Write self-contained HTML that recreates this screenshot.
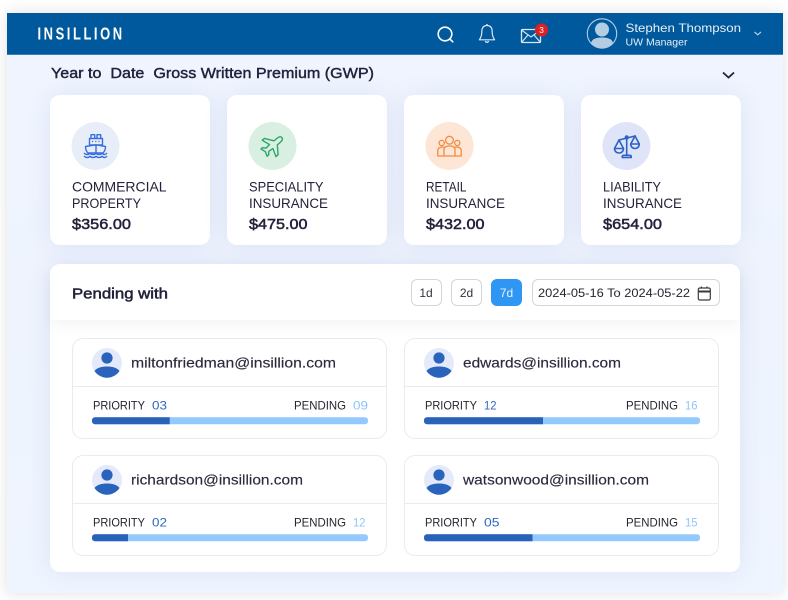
<!DOCTYPE html>
<html lang="en">
<head>
<meta charset="utf-8">
<title>Insillion</title>
<style>
html,body{margin:0;padding:0;width:788px;height:600px;overflow:hidden;background:#fff;}
.abs{position:absolute;box-sizing:border-box;}
#frame{left:7px;top:13px;width:776px;height:580px;background:linear-gradient(180deg,#f0f5ff 0%,#eef3fd 50%,#eff5ff 100%);box-shadow:0 0 14px rgba(0,0,0,.12);overflow:hidden;}
#hdr{left:7px;top:13px;width:776px;height:41.5px;background:#00599c;border-bottom:1px solid #3a80b8;}
.card{top:95px;width:160px;height:150px;background:#fff;border-radius:10px;box-shadow:0 0 24px rgba(90,110,170,.12);}
#panel{left:50px;top:263.5px;width:690px;height:308px;background:#fff;border-radius:10px;box-shadow:0 0 24px rgba(90,110,170,.12);}
#ph{left:50px;top:263.5px;width:690px;height:56.5px;background:#fff;border-radius:10px 10px 0 0;box-shadow:0 6px 14px rgba(0,0,0,.045);}
.in{width:314.5px;height:101px;background:#fff;border:1px solid #e9ebef;border-radius:11px;}
.btn{top:279px;width:31px;height:27px;background:#fff;border:1px solid #d6d6d6;border-radius:6px;}
svg{position:absolute;left:0;top:0;}
text{font-family:"Liberation Sans",sans-serif;}
.n{fill:#22223a;}
</style>
</head>
<body>
<div class="abs" id="frame"></div>
<div class="abs card" style="left:50px"></div>
<div class="abs card" style="left:227px"></div>
<div class="abs card" style="left:404px"></div>
<div class="abs card" style="left:581px"></div>
<div class="abs" id="panel"></div>
<div class="abs" id="ph"></div>
<div class="abs in" style="left:72px;top:337.5px"></div>
<div class="abs in" style="left:404px;top:337.5px"></div>
<div class="abs in" style="left:72px;top:454.5px"></div>
<div class="abs in" style="left:404px;top:454.5px"></div>
<div class="abs btn" style="left:410.5px"></div>
<div class="abs btn" style="left:451px"></div>
<div class="abs btn" style="left:491px;background:#3096f3;border-color:#3096f3"></div>
<div class="abs btn" style="left:531.5px;width:188.5px"></div>
<div class="abs" id="hdr"></div>

<svg width="788" height="600" viewBox="0 0 788 600" xmlns="http://www.w3.org/2000/svg">
<defs>
<clipPath id="uc"><circle cx="0" cy="0" r="15"/></clipPath>
<g id="av">
<circle r="15" fill="#e4eafb"/>
<circle cy="-5" r="5.6" fill="#2a63bb"/>
<path d="M-12.5,8 C-10,4.5 -5,3.5 0,3.5 C5,3.5 10,4.5 12.5,8 A15,15 0 0 1 -12.5,8Z" fill="#2a63bb"/>
</g>
</defs>

<!-- Header -->
<g transform="translate(37.5,39.5) scale(.72,1)">
<text x="0" y="0" font-size="18" font-weight="700" fill="#fff" textLength="117.5" lengthAdjust="spacing">INSILLION</text>
</g>

<circle cx="445" cy="34" r="6.8" fill="none" stroke="#fff" stroke-width="1.6"/>
<path d="M449.8,39 L452.8,41.8" stroke="#fff" stroke-width="1.6" stroke-linecap="round"/>

<path d="M487,25.5 C483,25.5 481.8,28.5 481.8,32 C481.8,36 480.6,38 479.4,39.8 L494.6,39.8 C493.4,38 492.2,36 492.2,32 C492.2,28.5 491,25.5 487,25.5Z" fill="none" stroke="#dbe8f3" stroke-width="1.2" stroke-linejoin="round"/>
<path d="M485.4,41 C486,42.8 488,42.8 488.6,41" fill="none" stroke="#dbe8f3" stroke-width="1.2"/>
<path d="M487,25.5 V24" stroke="#dbe8f3" stroke-width="1.4"/>

<rect x="521.5" y="29.5" width="19" height="13" rx="1" fill="none" stroke="#dbe8f3" stroke-width="1.3"/>
<path d="M521.5,30 L531,37 L540.5,30 M521.5,42.5 L528,35 M540.5,42.5 L534,35" fill="none" stroke="#dbe8f3" stroke-width="1.1"/>
<circle cx="541.5" cy="30" r="6.5" fill="#e02020"/>
<text x="541.5" y="33" font-size="8.5" fill="#fff" text-anchor="middle">3</text>

<circle cx="602" cy="33.5" r="14.7" fill="none" stroke="#b3cde3" stroke-width="1.1"/>
<circle cx="602" cy="29.5" r="7" fill="#b3cde3"/>
<path d="M591,43 C592,38.5 597,37.5 602,37.5 C607,37.5 612,38.5 613,43 C610,46.5 606,48 602,48 C598,48 594,46.5 591,43Z" fill="#b3cde3"/>

<text x="625.5" y="32" font-size="12" fill="#e6eff7" textLength="115.5" lengthAdjust="spacingAndGlyphs">Stephen Thompson</text>
<text x="625.5" y="45.5" font-size="10" fill="#e6eff7" textLength="62" lengthAdjust="spacingAndGlyphs">UW Manager</text>
<path d="M754.5,32 L757.7,34.8 L761,32" fill="none" stroke="#b3cde3" stroke-width="1.2"/>

<!-- Title -->
<text class="n" x="51" y="78" font-size="14.5" stroke="#22223a" stroke-width=".4" textLength="323" lengthAdjust="spacingAndGlyphs" xml:space="preserve">Year to  Date  Gross Written Premium (GWP)</text>
<path d="M723,72.5 L728.5,77.5 L734,72.5" fill="none" stroke="#22223a" stroke-width="1.8"/>

<!-- Card icons -->
<circle cx="95.5" cy="146" r="24" fill="#e8eef8"/>
<g fill="none" stroke="#3a6ee0" stroke-width="1.4" stroke-linejoin="round">
<path d="M91,138.5 V134.7 H94.7 V138.5 M97,138.5 V134.7 H100.7 V138.5"/>
<rect x="89.5" y="138.5" width="13" height="6.5"/>
<path d="M85.5,146.5 L96,144.8 L105.5,146.5 C105.5,149.5 104.5,151.5 103,153 H88 C86.5,151.5 85.5,149.5 85.5,146.5Z M96,145 V153"/>
<path d="M84,153 C86,155 88,155 90,153.3 C92,155 94,155 96,153.3 C98,155 100,155 102,153.3 C104,155 105.5,155 107,153"/>
<path d="M84,156 C86,158 88,158 90,156.3 C92,158 94,158 96,156.3 C98,158 100,158 102,156.3 C104,158 105.5,158 107,156"/>
<path d="M92,141.5 H93.2 M95.2,141.5 H96.4 M98.4,141.5 H99.6" stroke-width="1.2"/>
</g>

<circle cx="272.5" cy="146" r="24" fill="#d8efe2"/>
<g transform="translate(272.5,145.5) rotate(50) scale(.82)">
<path d="M0,-15 C2.4,-15 3.2,-12 3.2,-9 L3.2,-5 L13,2 L13,5.5 L3.2,2 L2.6,8 L5.8,11 L5.8,13.5 L0,11.5 L-5.8,13.5 L-5.8,11 L-2.6,8 L-3.2,2 L-13,5.5 L-13,2 L-3.2,-5 L-3.2,-9 C-3.2,-12 -2.4,-15 0,-15Z" fill="none" stroke="#2ea568" stroke-width="1.7" stroke-linejoin="round"/>
</g>

<circle cx="449.5" cy="146" r="24" fill="#fde6d6"/>
<g fill="none" stroke="#f58a3f" stroke-width="1.3" stroke-linejoin="round">
<circle cx="449.5" cy="140.2" r="3.9"/>
<circle cx="441.7" cy="143" r="2.6"/>
<circle cx="457.3" cy="143" r="2.6"/>
<path d="M444,156 V149.5 C444,147 446.5,146 449.5,146 C452.5,146 455,147 455,149.5 V156Z"/>
<path d="M444,147.3 C441.5,146.5 437.8,147.5 437.8,150.5 V156 H444 M455,147.3 C457.5,146.5 461.2,147.5 461.2,150.5 V156 H455"/>
</g>

<circle cx="626.5" cy="146" r="24" fill="#e0e4f8"/>
<g fill="none" stroke="#2a63c4" stroke-width="1.6" stroke-linejoin="round" stroke-linecap="round">
<path d="M626.7,137.5 V155.5"/>
<path d="M619,140 L635,136"/>
<circle cx="626.7" cy="137.5" r="1.4"/>
<path d="M619,140 L614.5,148.5 M619,140 L623.5,148.5 M614.5,148.5 C614.5,154.5 623.5,154.5 623.5,148.5Z"/>
<path d="M635,136 L630.7,144 M635,136 L639.3,144 M630.7,144 C630.7,150 639.3,150 639.3,144Z"/>
<path d="M622.3,157.5 V156.5 C622.3,155.7 623,155.3 624,155.3 H629.5 C630.5,155.3 631.2,155.7 631.2,156.5 V157.5Z"/>
</g>

<!-- Card labels -->
<g class="n" font-size="14" fill="#2a2a3e">
<text x="72" y="191.5" textLength="94.5" lengthAdjust="spacingAndGlyphs">COMMERCIAL</text>
<text x="72" y="208" textLength="69" lengthAdjust="spacingAndGlyphs">PROPERTY</text>
<text x="249" y="191.5" textLength="74.5" lengthAdjust="spacingAndGlyphs">SPECIALITY</text>
<text x="249" y="208" textLength="79" lengthAdjust="spacingAndGlyphs">INSURANCE</text>
<text x="426" y="191.5" textLength="40.5" lengthAdjust="spacingAndGlyphs">RETAIL</text>
<text x="426" y="208" textLength="79" lengthAdjust="spacingAndGlyphs">INSURANCE</text>
<text x="603" y="191.5" textLength="58" lengthAdjust="spacingAndGlyphs">LIABILITY</text>
<text x="603" y="208" textLength="79" lengthAdjust="spacingAndGlyphs">INSURANCE</text>
</g>
<g font-size="14.5" fill="#22223a" stroke="#22223a" stroke-width=".5">
<text x="72" y="229" textLength="59" lengthAdjust="spacingAndGlyphs">$356.00</text>
<text x="249" y="229" textLength="58.5" lengthAdjust="spacingAndGlyphs">$475.00</text>
<text x="426" y="229" textLength="58.5" lengthAdjust="spacingAndGlyphs">$432.00</text>
<text x="603" y="229" textLength="59" lengthAdjust="spacingAndGlyphs">$654.00</text>
</g>

<!-- Panel head -->
<text x="72" y="298.5" font-size="14.5" fill="#22223a" stroke="#22223a" stroke-width=".5" textLength="96" lengthAdjust="spacingAndGlyphs">Pending with</text>
<text x="426" y="297" font-size="12" fill="#33333f" text-anchor="middle">1d</text>
<text x="466.5" y="297" font-size="12" fill="#33333f" text-anchor="middle">2d</text>
<text x="506.5" y="297" font-size="12" fill="#e8f3fe" text-anchor="middle">7d</text>
<text x="538" y="297" font-size="11.5" fill="#25252f" textLength="152" lengthAdjust="spacingAndGlyphs">2024-05-16 To 2024-05-22</text>
<g fill="none" stroke="#3a3a40" stroke-width="1.2">
<rect x="698.3" y="288" width="12" height="12" rx="1.5"/>
<path d="M698.3,291.5 H710.3" stroke-width="2"/>
<path d="M701.5,286.5 V288.5 M707,286.5 V288.5"/>
</g>

<!-- Inner cards -->
<use href="#av" x="107" y="363"/>
<use href="#av" x="439" y="363"/>
<use href="#av" x="107" y="480"/>
<use href="#av" x="439" y="480"/>

<g font-size="14" fill="#2a2a3e" stroke="#2a2a3e" stroke-width=".15">
<text x="131" y="367.5" textLength="205" lengthAdjust="spacingAndGlyphs">miltonfriedman@insillion.com</text>
<text x="463" y="367.5" textLength="158" lengthAdjust="spacingAndGlyphs">edwards@insillion.com</text>
<text x="131" y="484.5" textLength="172" lengthAdjust="spacingAndGlyphs">richardson@insillion.com</text>
<text x="463" y="484.5" textLength="186" lengthAdjust="spacingAndGlyphs">watsonwood@insillion.com</text>
</g>

<g stroke="#e9ebef" stroke-width="1">
<path d="M73,386.5 H386 M405,386.5 H718 M73,503.5 H386 M405,503.5 H718"/>
</g>

<g font-size="12" fill="#25252f">
<text x="93" y="409.5" textLength="52" lengthAdjust="spacingAndGlyphs">PRIORITY</text>
<text x="294" y="409.5" textLength="52" lengthAdjust="spacingAndGlyphs">PENDING</text>
<text x="425" y="409.5" textLength="52" lengthAdjust="spacingAndGlyphs">PRIORITY</text>
<text x="626" y="409.5" textLength="52" lengthAdjust="spacingAndGlyphs">PENDING</text>
<text x="93" y="526.5" textLength="52" lengthAdjust="spacingAndGlyphs">PRIORITY</text>
<text x="294" y="526.5" textLength="52" lengthAdjust="spacingAndGlyphs">PENDING</text>
<text x="425" y="526.5" textLength="52" lengthAdjust="spacingAndGlyphs">PRIORITY</text>
<text x="626" y="526.5" textLength="52" lengthAdjust="spacingAndGlyphs">PENDING</text>
</g>
<g font-size="12" fill="#2d68c2">
<text x="152" y="409.5" textLength="15" lengthAdjust="spacingAndGlyphs">03</text>
<text x="484" y="409.5" textLength="12.5" lengthAdjust="spacingAndGlyphs">12</text>
<text x="152" y="526.5" textLength="15" lengthAdjust="spacingAndGlyphs">02</text>
<text x="484" y="526.5" textLength="15.5" lengthAdjust="spacingAndGlyphs">05</text>
</g>
<g font-size="12" fill="#90c4fb">
<text x="353" y="409.5" textLength="15" lengthAdjust="spacingAndGlyphs">09</text>
<text x="685" y="409.5" textLength="12.5" lengthAdjust="spacingAndGlyphs">16</text>
<text x="353" y="526.5" textLength="12.5" lengthAdjust="spacingAndGlyphs">12</text>
<text x="685" y="526.5" textLength="12.5" lengthAdjust="spacingAndGlyphs">15</text>
</g>

<!-- Bars -->
<rect x="92" y="417.3" width="276" height="7" rx="3" fill="#93c9fc"/>
<rect x="424" y="417.3" width="276" height="7" rx="3" fill="#93c9fc"/>
<rect x="92" y="534.3" width="276" height="7" rx="3" fill="#93c9fc"/>
<rect x="424" y="534.3" width="276" height="7" rx="3" fill="#93c9fc"/>
<path d="M95,417.3 H169.7 V424.3 H95 A3,3 0 0 1 92,421.3 V420.3 A3,3 0 0 1 95,417.3Z" fill="#2a62ba"/>
<path d="M427,417.3 H543 V424.3 H427 A3,3 0 0 1 424,421.3 V420.3 A3,3 0 0 1 427,417.3Z" fill="#2a62ba"/>
<path d="M95,534.3 H128 V541.3 H95 A3,3 0 0 1 92,538.3 V537.3 A3,3 0 0 1 95,534.3Z" fill="#2a62ba"/>
<path d="M427,534.3 H532.5 V541.3 H427 A3,3 0 0 1 424,538.3 V537.3 A3,3 0 0 1 427,534.3Z" fill="#2a62ba"/>
</svg>
</body>
</html>
